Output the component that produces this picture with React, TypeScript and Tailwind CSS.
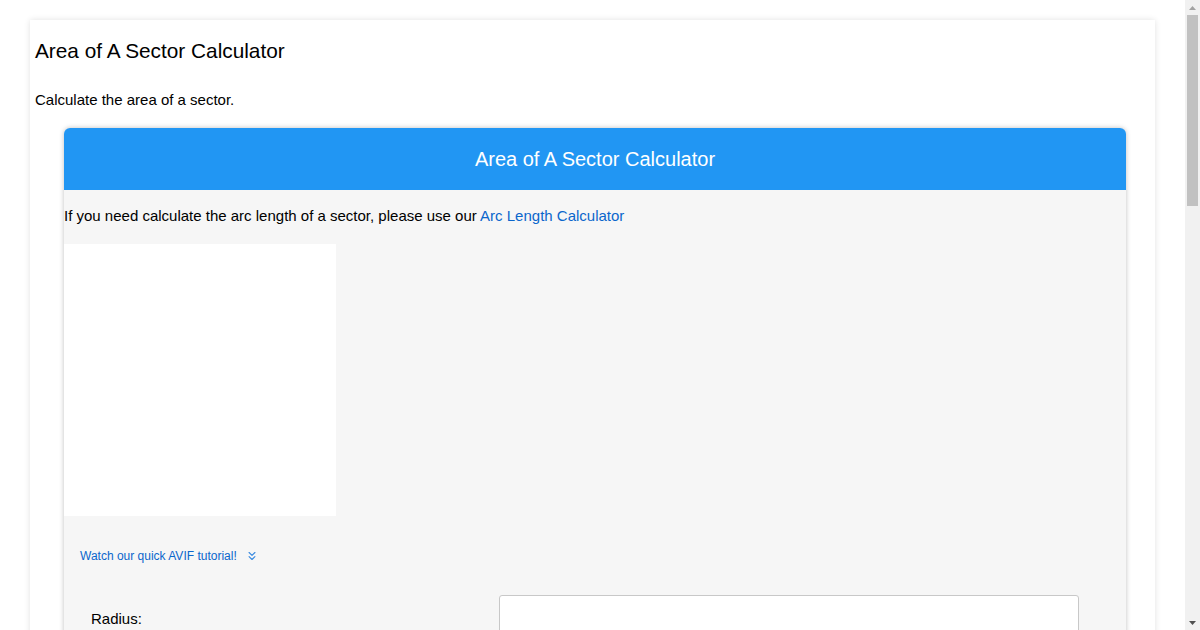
import { ChevronsDown } from "lucide-react";

function Scrollbar() {
	return (
		<div className="flex h-[630px] w-[15px] shrink-0 flex-col items-center bg-[#f1f1f1]">
			<div className="flex h-[15px] w-full items-center justify-center">
				<svg width="7" height="4" viewBox="0 0 7 4"><path d="M0 4 L3.5 0 L7 4 Z" fill="#a3a3a3" /></svg>
			</div>
			<div className="h-[191px] w-[11px] bg-[#c1c1c1]" />
			<div className="flex-1" />
			<div className="flex h-[15px] w-full items-center justify-center">
				<svg width="7" height="4" viewBox="0 0 7 4"><path d="M0 0 L7 0 L3.5 4 Z" fill="#505050" /></svg>
			</div>
		</div>
	);
}

export default function App() {
	return (
		<div className="flex h-[630px] overflow-hidden bg-white font-['Liberation_Sans',Arial,sans-serif] text-black">
			<div className="w-[1185px] shrink-0 pt-[20px]">
				<div className="mx-[30px] w-[1125px] bg-white pl-[5px] pb-10 shadow-[0_0_6px_rgba(0,0,0,0.12)]">
					<h1 className="pt-[19px] text-[20.8px] leading-[24px]">Area of A Sector Calculator</h1>
					<p className="mt-[28px] text-[15px] leading-[18px]">Calculate the area of a sector.</p>

					<div className="ml-[29px] mr-[29px] mt-[19px] rounded-t-[6px] bg-[#f6f6f6] shadow-[0_0_5px_rgba(0,0,0,0.25)]">
						<div className="flex h-[62px] items-center justify-center rounded-t-[6px] bg-[#2196f3] text-[20px] text-white">
							Area of A Sector Calculator
						</div>
						<p className="mt-[17px] text-[15px] leading-[18px]">
							If you need calculate the arc length of a sector, please use our{" "}
							<a className="text-[#0b66cc]" href="#">Arc Length Calculator</a>
						</p>
						<div className="mt-[19px] h-[272px] w-[272px] bg-white" />
						<div className="mt-[33px] flex items-center gap-[8px] pl-[16px] text-[12px] leading-[14px] text-[#0b66cc]">
							<span>Watch our quick AVIF tutorial!</span>
							<ChevronsDown className="h-[14px] w-[14px] text-[#3b8be0]" strokeWidth={2} />
						</div>
						<div className="mt-[32px] flex items-start pb-[300px]">
							<label className="w-[435px] pl-[27px] pt-[15px] text-[15px] leading-[18px]">Radius:</label>
							<div className="h-[40px] w-[580px] rounded-[3px] border border-[#c8c8c8] bg-white" />
						</div>
					</div>
				</div>
			</div>
			<Scrollbar />
		</div>
	);
}
